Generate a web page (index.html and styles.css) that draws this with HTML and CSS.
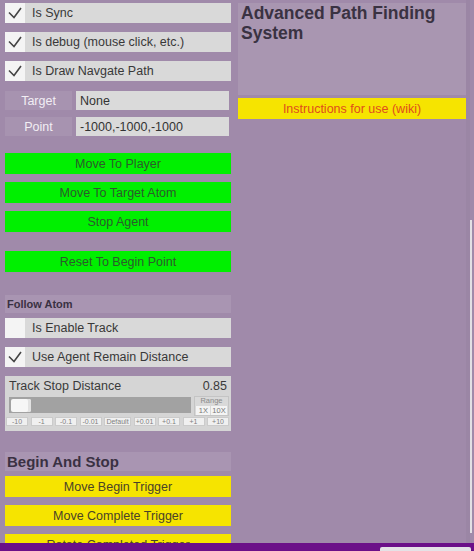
FILE: index.html
```html
<!DOCTYPE html>
<html>
<head>
<meta charset="utf-8">
<link rel="stylesheet" href="styles.css">
</head>
<body>
<div class="page">
  <div class="left">
    <div class="toggle">
      <span class="box"><svg viewBox="0 0 20 20" width="20" height="20"><polyline points="4,9.5 9,14.5 16,5" fill="none" stroke="#444" stroke-width="1.6"/></svg></span>
      <span class="lbl">Is Sync</span>
    </div>
    <div class="toggle">
      <span class="box"><svg viewBox="0 0 20 20" width="20" height="20"><polyline points="4,9.5 9,14.5 16,5" fill="none" stroke="#444" stroke-width="1.6"/></svg></span>
      <span class="lbl">Is debug (mouse click, etc.)</span>
    </div>
    <div class="toggle">
      <span class="box"><svg viewBox="0 0 20 20" width="20" height="20"><polyline points="4,9.5 9,14.5 16,5" fill="none" stroke="#444" stroke-width="1.6"/></svg></span>
      <span class="lbl">Is Draw Navgate Path</span>
    </div>

    <div class="field-row target-row">
      <span class="flabel">Target</span>
      <span class="fval">None</span>
    </div>
    <div class="field-row point-row">
      <span class="flabel">Point</span>
      <span class="fval">-1000,-1000,-1000</span>
    </div>

    <div class="btn green first-green">Move To Player</div>
    <div class="btn green">Move To Target Atom</div>
    <div class="btn green">Stop Agent</div>
    <div class="btn green reset">Reset To Begin Point</div>

    <div class="header small-header">Follow Atom</div>
    <div class="toggle after-header">
      <span class="box"></span>
      <span class="lbl">Is Enable Track</span>
    </div>
    <div class="toggle">
      <span class="box"><svg viewBox="0 0 20 20" width="20" height="20"><polyline points="4,9.5 9,14.5 16,5" fill="none" stroke="#444" stroke-width="1.6"/></svg></span>
      <span class="lbl">Use Agent Remain Distance</span>
    </div>

    <div class="slider-panel">
      <div class="slider-title">
        <span>Track Stop Distance</span>
        <span>0.85</span>
      </div>
      <div class="slider-row">
        <div class="track"><div class="handle"></div></div>
        <div class="range">
          <span class="range-lbl">Range</span>
          <div class="range-btns"><span class="rb">1X</span><span class="rb">10X</span></div>
        </div>
      </div>
      <div class="step-row">
        <span class="step">-10</span>
        <span class="step">-1</span>
        <span class="step">-0.1</span>
        <span class="step">-0.01</span>
        <span class="step wide">Default</span>
        <span class="step">+0.01</span>
        <span class="step">+0.1</span>
        <span class="step">+1</span>
        <span class="step">+10</span>
      </div>
    </div>

    <div class="header big-header">Begin And Stop</div>
    <div class="btn yellow after-header">Move Begin Trigger</div>
    <div class="btn yellow">Move Complete Trigger</div>
    <div class="btn yellow">Rotate Completed Trigger</div>
  </div>

  <div class="right">
    <div class="title-panel">
      <h1 class="title">Advanced Path Finding System</h1>
    </div>
    <div class="btn yellow wiki">Instructions for use (wiki)</div>
  </div>
</div>

<div class="edgestrip"></div>
<div class="scrollline"></div>
<div class="bottombar"><div class="bottom-tab"></div></div>
</body>
</html>
```

FILE: styles.css
```css
html, body {
  margin: 0;
  padding: 0;
}

body {
  background: #a08aaa;
  font-family: "Liberation Sans", Arial, sans-serif;
  font-size: 12.5px;
  color: #333;
  height: 551px;
  overflow: hidden;
}

.page {
  display: flex;
  gap: 7px;
  padding: 3px 0 0 5px;
}

.left {
  width: 226px;
  display: flex;
  flex-direction: column;
}

.right {
  width: 228px;
  display: flex;
  flex-direction: column;
}

/* toggles */
.toggle {
  display: flex;
  height: 20px;
  margin-bottom: 9px;
}

.toggle .box {
  width: 20px;
  height: 20px;
  background: #f4f4f4;
  flex: none;
  display: block;
}

.toggle .box svg {
  display: block;
}

.toggle .lbl {
  flex: 1;
  background: #d9d9d9;
  display: flex;
  align-items: center;
  padding-left: 7px;
  color: #383838;
}

/* fields */
.field-row {
  display: flex;
  gap: 4px;
  height: 19px;
  width: 224px;
}

.target-row {
  margin-top: 1px;
}

.point-row {
  margin-top: 7px;
}

.flabel {
  width: 67px;
  background: #a793b0;
  color: #f2eef4;
  display: flex;
  align-items: center;
  justify-content: center;
}

.fval {
  flex: 1;
  background: #dadada;
  color: #333;
  display: flex;
  align-items: center;
  padding-left: 4px;
}

/* buttons */
.btn {
  height: 21px;
  display: flex;
  align-items: center;
  justify-content: center;
  margin-bottom: 8px;
}

.green {
  background: #00f000;
  color: #2b5c2b;
}

.yellow {
  background: #f6e400;
  color: #4a4228;
}

.first-green {
  margin-top: 17px;
}

.reset {
  margin-top: 11px;
}

/* headers */
.header {
  background: #a995b2;
  color: #3a3142;
  font-weight: bold;
  display: flex;
  align-items: center;
  padding-left: 2px;
}

.small-header {
  height: 18px;
  font-size: 11px;
  margin-top: 15px;
}

.big-header {
  height: 19px;
  font-size: 15px;
  margin-top: 21px;
}

.toggle.after-header,
.btn.after-header {
  margin-top: 5px;
}

/* slider panel */
.slider-panel {
  background: #d5d5d5;
  height: 55px;
  box-sizing: border-box;
  padding: 3px 2px 0 1px;
  display: flex;
  flex-direction: column;
}

.slider-title {
  display: flex;
  justify-content: space-between;
  height: 15px;
  line-height: 15px;
  padding: 0 2px 0 3px;
  color: #3a3a3a;
  margin-bottom: 2px;
}

.slider-row {
  display: flex;
  gap: 3px;
  padding-left: 3px;
  height: 20px;
}

.track {
  flex: 1;
  margin-top: 1px;
  height: 16px;
  background: #a2a2a2;
  position: relative;
}

.handle {
  position: absolute;
  left: 2px;
  top: 2px;
  width: 20px;
  height: 13px;
  background: #f6f6f6;
  border-radius: 2px;
  box-shadow: inset -3px 0 0 #e2e2e2;
}

.range {
  width: 35px;
  box-sizing: border-box;
  border: 1px solid #c4c4c4;
  background: #d9d9d9;
  display: flex;
  flex-direction: column;
  align-items: center;
}

.range-lbl {
  font-size: 7.5px;
  color: #8a8a8a;
  line-height: 8px;
  margin-top: 0;
}

.range-btns {
  display: flex;
  gap: 1px;
  margin-top: 1px;
}

.rb {
  background: #f4f4f4;
  font-size: 7.5px;
  line-height: 9px;
  color: #777;
  padding: 0 1px;
  min-width: 12px;
  text-align: center;
}

.step-row {
  display: flex;
  gap: 2.5px;
  margin-top: 1px;
  height: 9px;
}

.step {
  flex: 1;
  background: #f0f0f0;
  border: 1px solid #cbcbcb;
  box-sizing: border-box;
  font-size: 7px;
  line-height: 7px;
  color: #808080;
  text-align: center;
  white-space: nowrap;
  overflow: hidden;
}

.step.wide {
  flex: 1.25;
}

/* right side */
.title-panel {
  height: 92px;
  background: #a996b1;
}

.title {
  margin: 0;
  padding: 0 0 0 3px;
  font-size: 17.5px;
  line-height: 20px;
  font-weight: bold;
  color: #3a3242;
}

.wiki {
  margin-top: 3px;
  color: #e04e1c;
}

/* overlays */
.edgestrip {
  position: fixed;
  left: 466px;
  top: 0;
  width: 4px;
  height: 543px;
  background: #9b86a5;
}

.scrollline {
  position: fixed;
  left: 470px;
  top: 220px;
  width: 2px;
  height: 313px;
  background: #e2e0e4;
}

.bottombar {
  position: fixed;
  left: 0;
  right: 0;
  bottom: 0;
  height: 8px;
  background: #6b1088;
}

.bottom-tab {
  position: absolute;
  left: 380px;
  top: 4px;
  width: 91px;
  height: 6px;
  background: #e4e2e6;
  border-radius: 2px 2px 0 0;
}
```
